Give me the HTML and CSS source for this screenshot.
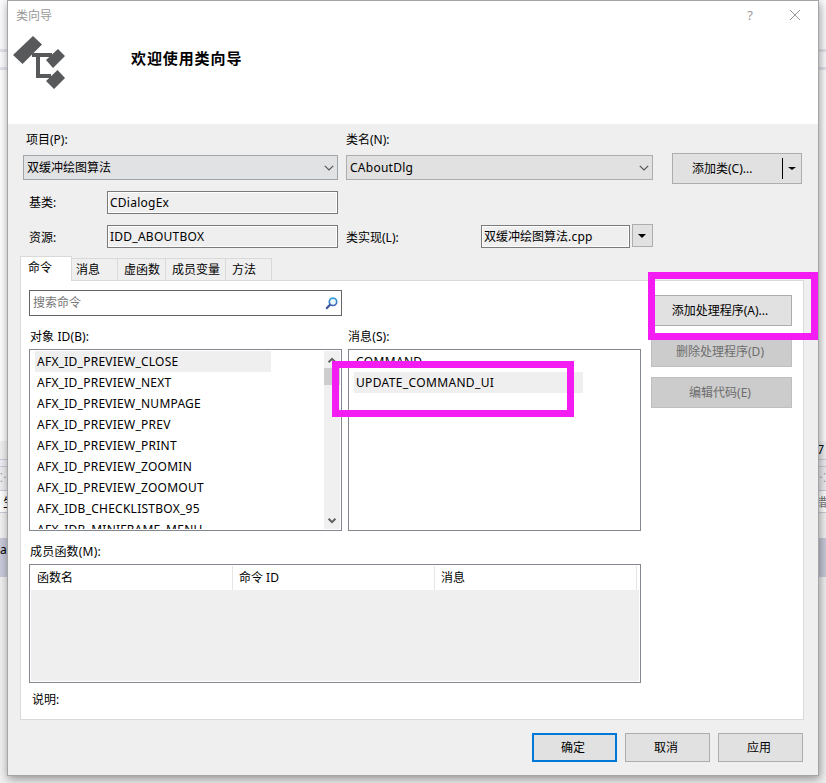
FILE: index.html
```html
<!DOCTYPE html>
<html lang="zh-CN">
<head>
<meta charset="utf-8">
<title>类向导</title>
<link rel="stylesheet" href="styles.css">
</head>
<body>
<div class="backdrop">
  <div class="bd-top"></div>
  <div class="bd-tab"></div>
  <div class="bd-editor"></div>
  <div class="bd-status"><span></span><span>7</span></div>
  <div class="bd-split"></div>
  <div class="bd-grip"><span>⁙</span><span>⁙</span></div>
  <div class="bd-filter"><span class="bd-combo">生</span><span class="bd-hint">错</span></div>
  <div class="bd-gap"></div>
  <div class="bd-row"><span>a</span></div>
</div>
<main class="dialog">
  <header class="header">
    <div class="titlebar">
      <span class="title">类向导</span>
      <span class="help">?</span>
      <svg class="close" width="12" height="12" viewBox="0 0 12 12"><path d="M1 1l10 10M11 1L1 11"/></svg>
    </div>
    <div class="banner">
      <svg class="logo" width="54" height="54" viewBox="12 35 54 54"><path d="M13 55L33 36l9 8.500L22.500 64zM46 60l12-11 7 7-12 12zM46 81l11.500-11L65 78 54 89zM32 53h20v4H40v17h11v4H36V57h-4z"/></svg>
      <h1>欢迎使用类向导</h1>
    </div>
  </header>

  <section class="form">
    <div class="field project">
      <label>项目(P):</label>
      <div class="select tinted">双缓冲绘图算法<svg width="10" height="6" viewBox="0 0 10 6"><path d="M.8.8L5 5 9.200.8"/></svg></div>
    </div>
    <div class="field classname">
      <label>类名(N):</label>
      <div class="select latin">CAboutDlg<svg width="10" height="6" viewBox="0 0 10 6"><path d="M.8.8L5 5 9.200.8"/></svg></div>
    </div>
    <div class="button split"><span>添加类(C)...</span><i class="divider"></i><i class="tri"></i></div>
  </section>
  <section class="line base">
    <label>基类:</label><div class="input wide latin">CDialogEx</div>
  </section>
  <section class="line res">
    <label>资源:</label><div class="input wide latin">IDD_ABOUTBOX</div>
    <label class="impl">类实现(L):</label><div class="input file">双缓冲绘图算法<span class="latin">.cpp</span></div>
    <div class="drop"><i class="tri"></i></div>
  </section>

  <nav class="tabs">
    <span class="tab active">命令</span><span class="tab t2">消息</span><span class="tab t3">虚函数</span><span class="tab t4">成员变量</span><span class="tab t5">方法</span>
  </nav>
  <section class="panel">
    <div class="content">
      <div class="search"><span>搜索命令</span>
        <svg width="13" height="13" viewBox="0 0 13 13"><defs><linearGradient id="g" x1="0" y1="0" x2="0" y2="1"><stop offset="0" stop-color="#3aa0dc"/><stop offset="1" stop-color="#3e62b4"/></linearGradient></defs><circle cx="8" cy="4.800" r="3.700" fill="#eef8ff" stroke="url(#g)" stroke-width="1.700"/><path d="M5.300 7.600L1.200 11.800" stroke="#3c569c" stroke-width="2.200"/></svg>
      </div>
      <div class="lists">
        <div class="col ids">
          <label>对象 ID(B):</label>
          <div class="listbox">
            <ul>
              <li class="on">AFX_ID_PREVIEW_CLOSE</li>
              <li>AFX_ID_PREVIEW_NEXT</li>
              <li>AFX_ID_PREVIEW_NUMPAGE</li>
              <li>AFX_ID_PREVIEW_PREV</li>
              <li>AFX_ID_PREVIEW_PRINT</li>
              <li>AFX_ID_PREVIEW_ZOOMIN</li>
              <li>AFX_ID_PREVIEW_ZOOMOUT</li>
              <li>AFX_IDB_CHECKLISTBOX_95</li>
              <li>AFX_IDB_MINIFRAME_MENU</li>
            </ul>
            <div class="scroll">
              <svg width="16" height="17" viewBox="0 0 16 17"><path d="M4.600 11.200L8 7.800l3.400 3.400"/></svg>
              <div class="thumb"></div>
              <svg width="16" height="17" viewBox="0 0 16 17"><path d="M4.600 6.800L8 10.200l3.400-3.400"/></svg>
            </div>
          </div>
        </div>
        <div class="col msgs">
          <label>消息(S):</label>
          <div class="listbox">
            <ul>
              <li>COMMAND</li>
              <li class="on">UPDATE_COMMAND_UI</li>
            </ul>
          </div>
        </div>
      </div>
      <label class="members-label">成员函数(M):</label>
      <div class="table">
        <div class="thead"><span>函数名</span><span>命令 ID</span><span>消息</span></div>
        <div class="tbody"></div>
      </div>
      <label class="desc">说明:</label>
    </div>
    <aside class="actions">
      <div class="button">添加处理程序(A)...</div>
      <div class="button disabled">删除处理程序(D)</div>
      <div class="button disabled">编辑代码(E)</div>
    </aside>
  </section>
  <footer class="footer">
    <div class="button primary">确定</div>
    <div class="button">取消</div>
    <div class="button">应用</div>
  </footer>
</main>
<div class="mark mark-add"></div>
<div class="mark mark-msg"></div>
</body>
</html>
```
FILE: styles.css
```css
* { box-sizing: border-box; }
body {
  margin: 0;
  width: 826px;
  height: 783px;
  overflow: hidden;
  position: relative;
  background: #f0f0f0;
  color: #000;
  font: 12px/16px "Noto Sans", "Noto Sans CJK SC", sans-serif;
}
ul { list-style: none; margin: 0; padding: 0; }
svg { display: block; flex: none; }
label { display: block; white-space: nowrap; }
.latin { letter-spacing: .25px; }

/* window behind the dialog */
.backdrop {
  position: absolute;
  inset: 0;
  display: flex;
  flex-direction: column;
  overflow: hidden;
}
.backdrop > div { flex: none; display: flex; justify-content: space-between; }
.bd-top { height: 52px; background: #fbfbfd; border-bottom: 3px solid #e3e3ec; }
.bd-tab { height: 18px; background: #fbfbfd; border-bottom: 3px solid #e3e3ec; }
.bd-editor { height: 371px; background: #fdfdfd; }
.bd-status { height: 19px; background: #f0f0f0; border-bottom: 1px solid #ccccda; line-height: 18px; padding-right: 2px; }
.bd-split { height: 7px; background: #eeeef4; border-bottom: 1px solid #ccccda; }
.bd-grip { height: 24px; background: #eeeef2; border-bottom: 1px solid #ccccda; line-height: 22px; color: #999; }
.bd-filter { height: 22px; background: #fff; border-bottom: 1px solid #ccccda; line-height: 23px; }
.bd-combo { padding-left: 3px; }
.bd-hint { color: #717171; margin-right: -1px; }
.bd-gap { height: 25px; background: #f2f2f2; }
.bd-row { height: 39px; background: #c9cada; line-height: 24px; }

.dialog {
  position: relative;
  width: 812px;
  height: 776px;
  margin-left: 7px;
  border: 1px solid #a5a5a5;
  background: #efefef;
  box-shadow: 1px 3px 9px rgba(0, 0, 0, .4);
}
.header { height: 123px; background: #fff; }
.titlebar {
  height: 29px;
  display: flex;
  align-items: center;
  padding: 0 17px 0 8px;
  color: #999;
}
.title { flex: 1; }
.help { font-size: 13px; line-height: 14px; margin: -2px 36px 0 0; }
.close { stroke: #999; fill: none; margin-top: -1px; }
.banner { display: flex; align-items: flex-start; padding: 5px 0 0 4px; }
.logo { fill: #58595b; }
h1 {
  margin: 13px 0 0 65px;
  font-size: 15px;
  line-height: 20px;
  letter-spacing: .9px;
  font-weight: 700;
}

.form { display: flex; padding: 8px 0 0 15px; height: 60px; }
.field label { padding-left: 3px; height: 23px; }
.project { width: 315px; margin-right: 8px; }
.classname { width: 307px; margin-right: 19px; }
.classname label { padding-left: 0; }
.select {
  height: 25px;
  display: flex;
  align-items: center;
  justify-content: space-between;
  padding: 0 3px;
  border: 1px solid #adadad;
  background: #e1e1e1;
}
.select.tinted { border-color: #a0a5aa; background: #e0e2e4; }
.select svg { fill: none; stroke: #555; stroke-width: 1.2; }
.button {
  display: flex;
  align-items: center;
  justify-content: center;
  border: 1px solid #adadad;
  background: #e1e1e1;
  white-space: nowrap;
}
.split { width: 130px; height: 31px; margin-top: 21px; justify-content: flex-start; }
.split span { width: 109px; padding-left: 19px; }
.divider { width: 1px; height: 21px; background: #000; }
.tri { border: 4px solid transparent; border-top-color: #000; border-bottom: 0; }
.split .tri { margin-left: 5px; border-width: 3px 4px 0; }

.line { display: flex; padding-left: 21px; }
.line label { width: 78px; padding-top: 4px; }
.base { height: 34px; margin-top: 7px; }
.res { height: 31px; }
.res label { padding-top: 5px; }
.input {
  height: 23px;
  padding: 3px 2px;
  border: 1px solid #7a7a7a;
  box-shadow: inset 0 0 0 1px #fff;
  white-space: nowrap;
}
.input.wide { width: 231px; }
.line .impl { width: 135px; margin-left: 8px; }
.file { width: 149px; }
.drop {
  width: 21px;
  height: 23px;
  margin: -1px 0 0 2px;
  display: flex;
  align-items: center;
  justify-content: center;
  border: 1px solid #adadad;
  background: #e1e1e1;
}
.drop .tri { margin-right: 1px; }

.tabs { display: flex; align-items: flex-end; height: 25px; margin-left: 12px; position: relative; z-index: 1; }
.tab { height: 22px; margin-bottom: 1px; border: 1px solid #d9d9d9; border-left: 0; border-bottom: 0; padding-top: 3px; white-space: nowrap; }
.tab.active { width: 52px; height: 25px; margin-bottom: 0; border-left: 1px solid #d9d9d9; background: #fff; padding: 3px 0 0 7px; }
.t2 { width: 46px; padding-left: 4px; }
.t3 { width: 48px; padding-left: 6px; }
.t4 { width: 60px; padding-left: 6px; }
.t5 { width: 46px; padding-left: 6px; }
.panel {
  width: 784px;
  height: 440px;
  margin: -1px 0 0 12px;
  display: flex;
  border: 1px solid #d9d9d9;
  background: #fff;
}
.content { width: 612px; margin: 9px 10px 0 8px; flex: none; }
.search {
  width: 313px;
  height: 26px;
  display: flex;
  align-items: center;
  justify-content: space-between;
  padding: 0 3px;
  border: 1px solid #646464;
  color: #767676;
}
.lists { display: flex; gap: 6px; }
.col label { height: 33px; padding: 13px 0 0 1px; letter-spacing: .1px; }
.msgs label { padding-left: 0; }
.ids { width: 313px; }
.msgs { width: 293px; }
.listbox {
  height: 182px;
  display: flex;
  justify-content: space-between;
  border: 1px solid #828790;
  padding: 1px;
  overflow: hidden;
  letter-spacing: .25px;
}
.listbox ul { padding-left: 4px; height: 178px; overflow: hidden; }
.listbox li { height: 21px; padding-left: 2px; line-height: 21px; width: 236px; white-space: nowrap; }
.msgs .listbox { letter-spacing: .35px; }
.msgs li { width: 229px; }
.listbox .on { background: #efefef; }
.scroll { width: 16px; display: flex; flex-direction: column; background: #f0f0f0; }
.scroll svg { fill: none; stroke: #606060; stroke-width: 2; }
.scroll .thumb { height: 17px; margin-bottom: auto; background: #cdcdcd; }
.members-label { height: 33px; padding: 13px 0 0 1px; letter-spacing: .2px; }
.table { height: 119px; border: 1px solid #828790; padding: 1px; display: flex; flex-direction: column; }
.thead { display: flex; height: 24px; }
.thead span { width: 202px; border-right: 1px solid #e5e5e5; padding: 4px 0 0 6px; }
.tbody { flex: 1; background: #efefef; }
.desc { padding: 9px 0 0 3px; }
.actions { width: 141px; padding-top: 14px; display: flex; flex-direction: column; gap: 10px; }
.actions .button { height: 31px; padding-right: 3px; }
.button.disabled { background: #ccc; border-color: #bfbfbf; color: #6d6d6d; }

.footer { display: flex; justify-content: flex-end; gap: 8px; padding: 13px 15px 0 0; }
.footer .button { width: 85px; height: 29px; padding-right: 3px; }
.footer .primary { border: 2px solid #0078d7; }

/* highlighter frames over the dialog */
.mark { position: absolute; border: 7px solid #f31cf3; }
.mark-add { left: 648px; top: 272px; width: 170px; height: 68px; }
.mark-msg { left: 332px; top: 361px; width: 242px; height: 56px; }
```
